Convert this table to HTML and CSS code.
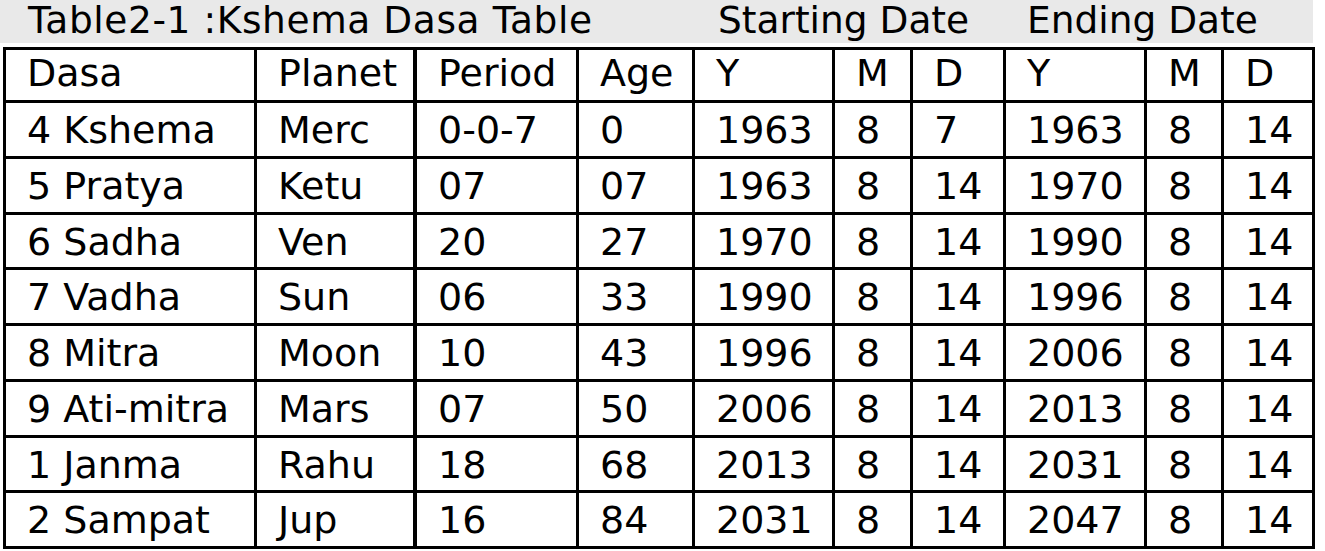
FILE: index.html
```html
<!DOCTYPE html>
<html>
<head>
<meta charset="utf-8">
<link rel="stylesheet" href="styles.css">
</head>
<body>
<div class="caption">
  <div class="cap-main">Table2-1 :Kshema Dasa Table</div>
  <div class="cap-start">Starting Date</div>
  <div class="cap-end">Ending Date</div>
</div>
<table class="dasa">
  <colgroup>
    <col class="c1"><col class="c2"><col class="c3"><col class="c4"><col class="c5">
    <col class="c6"><col class="c7"><col class="c8"><col class="c9"><col class="c10">
  </colgroup>
  <tr class="head"><td>Dasa</td><td class="sep">Planet</td><td>Period</td><td>Age</td><td>Y</td><td>M</td><td class="sep2">D</td><td>Y</td><td>M</td><td>D</td></tr>
  <tr><td>4 Kshema</td><td class="sep">Merc</td><td>0-0-7</td><td>0</td><td>1963</td><td>8</td><td class="sep2">7</td><td>1963</td><td>8</td><td>14</td></tr>
  <tr><td>5 Pratya</td><td class="sep">Ketu</td><td>07</td><td>07</td><td>1963</td><td>8</td><td class="sep2">14</td><td>1970</td><td>8</td><td>14</td></tr>
  <tr><td>6 Sadha</td><td class="sep">Ven</td><td>20</td><td>27</td><td>1970</td><td>8</td><td class="sep2">14</td><td>1990</td><td>8</td><td>14</td></tr>
  <tr><td>7 Vadha</td><td class="sep">Sun</td><td>06</td><td>33</td><td>1990</td><td>8</td><td class="sep2">14</td><td>1996</td><td>8</td><td>14</td></tr>
  <tr><td>8 Mitra</td><td class="sep">Moon</td><td>10</td><td>43</td><td>1996</td><td>8</td><td class="sep2">14</td><td>2006</td><td>8</td><td>14</td></tr>
  <tr><td>9 Ati-mitra</td><td class="sep">Mars</td><td>07</td><td>50</td><td>2006</td><td>8</td><td class="sep2">14</td><td>2013</td><td>8</td><td>14</td></tr>
  <tr><td>1 Janma</td><td class="sep">Rahu</td><td>18</td><td>68</td><td>2013</td><td>8</td><td class="sep2">14</td><td>2031</td><td>8</td><td>14</td></tr>
  <tr><td>2 Sampat</td><td class="sep">Jup</td><td>16</td><td>84</td><td>2031</td><td>8</td><td class="sep2">14</td><td>2047</td><td>8</td><td>14</td></tr>
</table>
</body>
</html>
```

FILE: styles.css
```css
html, body {
  margin: 0;
  padding: 0;
  background: #ffffff;
}
body {
  font-family: "DejaVu Sans", Verdana, sans-serif;
  color: #000;
}
.caption {
  width: 1313px;
  height: 43px;
  background: #e9e9e9;
  display: grid;
  grid-template-columns: 695px 310px 1fr;
  font-size: 37.5px;
  line-height: 41px;
  margin-bottom: 4px;
  white-space: nowrap;
}
.caption > div {
  padding-left: 28px;
}
.caption .cap-main { letter-spacing: 0.6px; }
.caption .cap-start { padding-left: 23px; }
.caption .cap-end { padding-left: 22px; }

.dasa {
  margin-left: 3px;
  width: 1312px;
  table-layout: fixed;
  border-collapse: separate;
  border-spacing: 0;
  border-top: 3px solid #000;
  border-left: 3px solid #000;
  font-size: 38px;
}
.c1 { width: 251px; }
.c2 { width: 160px; }
.c3 { width: 162px; }
.c4 { width: 116px; }
.c5 { width: 140px; }
.c6 { width: 78px; }
.c7 { width: 93px; }
.c8 { width: 141px; }
.c9 { width: 77px; }
.c10 { width: 91px; }

.dasa td {
  border-right: 3px solid #000;
  border-bottom: 3px solid #000;
  padding: 3px 0 0 21px;
  line-height: 49.75px;
  white-space: nowrap;
  overflow: hidden;
}
.dasa td.sep {
  border-right: 4px solid #000;
}
.dasa td.sep2 {
  border-right: 3px solid #000;
}
.dasa tr.head td {
  padding: 0 0 3px 21px;
  line-height: 47px;
}
```
